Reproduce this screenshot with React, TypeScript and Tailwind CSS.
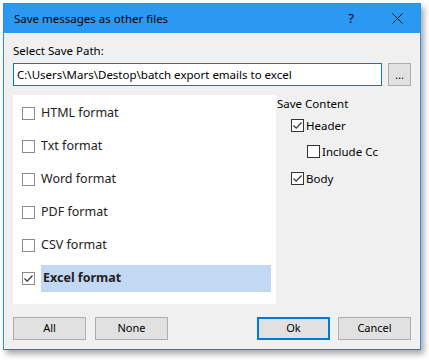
import React, { useState } from 'react';

const font = { fontFamily: '"Noto Sans", "Open Sans", sans-serif' };

const Check = ({ checked, dark }: { checked: boolean; dark?: boolean }) => (
  <span
    className={`flex h-[13px] w-[13px] shrink-0 items-center justify-center border bg-white ${
      dark ? 'border-[#333333]' : 'border-[#8c8c8c]'
    }`}
  >
    {checked && (
      <svg width="11" height="11" viewBox="0 0 11 11">
        <path d="M1.5 5.5 L4.2 8.2 L9.5 2.5" fill="none" stroke="#333" strokeWidth="1.2" />
      </svg>
    )}
  </span>
);

const formats = ['HTML format', 'Txt format', 'Word format', 'PDF format', 'CSV format', 'Excel format'];

const Btn = ({ label, primary }: { label: string; primary?: boolean }) => (
  <button
    className={`h-[23px] w-[73px] bg-[#e1e1e1] text-[11px] text-black ${
      primary ? 'border-2 border-[#0078d7]' : 'border border-[#adadad]'
    }`}
  >
    {label}
  </button>
);

export default function App() {
  const [selected, setSelected] = useState(5);
  const [header, setHeader] = useState(true);
  const [cc, setCc] = useState(false);
  const [body, setBody] = useState(true);

  return (
    <div className="h-[360px] w-[429px] bg-white pl-[3px] pt-[3px]" style={font}>
      <div className="flex h-[347px] w-[418px] flex-col border border-[#2b8fe6] border-b-[#5a6f86] bg-[#f0f0f0] shadow-[3px_4px_6px_rgba(0,0,0,0.35)]">
        {/* title bar */}
        <div className="flex h-[29px] shrink-0 items-center bg-[#2b99f2] pl-[10px] text-[11.5px] text-black">
          <span className="flex-1">Save messages as other files</span>
          <span className="w-[46px] text-center text-[13px]">?</span>
          <span className="flex w-[46px] items-center justify-center">
            <svg width="11" height="11" viewBox="0 0 11 11">
              <path d="M0.5 0.5 L10.5 10.5 M10.5 0.5 L0.5 10.5" stroke="#000" strokeWidth="1" />
            </svg>
          </span>
        </div>

        <div className="flex flex-1 flex-col px-[9px]">
          <div className="mt-[10px] text-[11.5px] leading-[16px] text-black">Select Save Path:</div>
          <div className="mt-[4px] flex items-center gap-[6px]">
            <div className="flex h-[23px] w-[369px] items-center border border-[#0078d7] bg-white px-[3px] text-[11.5px] text-black">
              C:\Users\Mars\Destop\batch export emails to excel
            </div>
            <button className="flex h-[23px] w-[23px] items-center justify-center border border-[#adadad] bg-[#e1e1e1] text-[11px] leading-none text-black">
              ...
            </button>
          </div>

          <div className="mt-[9px] flex">
            <div className="flex h-[209px] w-[263px] flex-col bg-white pl-[9px] pt-[2px]">
              {formats.map((f, i) => (
                <div
                  key={f}
                  onClick={() => setSelected(i)}
                  className="flex h-[33px] shrink-0 cursor-default items-center gap-[6px]"
                >
                  <Check checked={selected === i} />
                  <span
                    className={`flex h-[27px] items-center pr-[6px] text-[12.5px] ${
                      selected === i
                        ? 'w-[230px] bg-[#c3d8f3] pl-[2px] font-bold text-[#222]'
                        : 'text-[#222]'
                    }`}
                  >
                    {f}
                  </span>
                </div>
              ))}
            </div>

            <div className="flex flex-col pl-[1px] pt-[1px] text-[11.5px] text-black">
              <div className="leading-[16px]">Save Content</div>
              <label className="mt-[5px] ml-[14px] flex items-center gap-[2px]" onClick={() => setHeader(!header)}>
                <Check checked={header} dark />
                <span>Header</span>
              </label>
              <label className="mt-[9px] ml-[30px] flex items-center gap-[2px]" onClick={() => setCc(!cc)}>
                <Check checked={cc} dark />
                <span>Include Cc</span>
              </label>
              <label className="mt-[9px] ml-[14px] flex items-center gap-[2px]" onClick={() => setBody(!body)}>
                <Check checked={body} dark />
                <span>Body</span>
              </label>
            </div>
          </div>

          <div className="mt-[13px] flex items-center">
            <Btn label="All" />
            <span className="w-[9px]" />
            <Btn label="None" />
            <span className="flex-1" />
            <Btn label="Ok" primary />
            <span className="w-[8px]" />
            <Btn label="Cancel" />
          </div>
        </div>
      </div>
    </div>
  );
}
